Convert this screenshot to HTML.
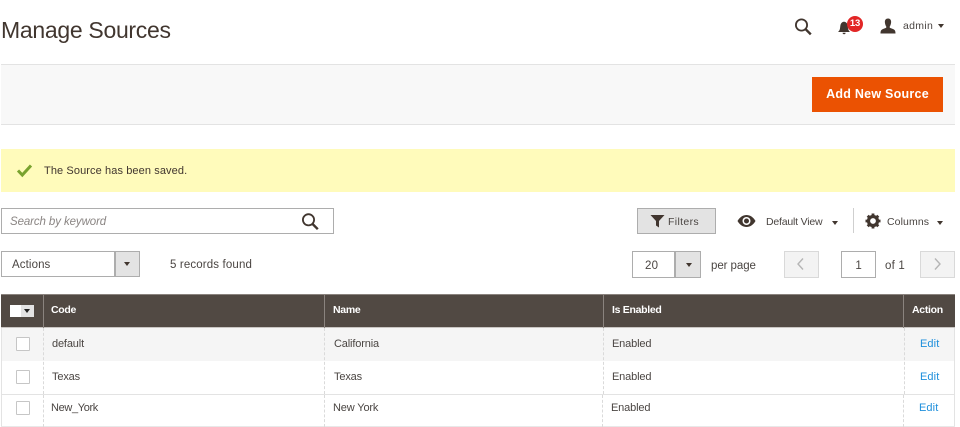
<!DOCTYPE html>
<html><head><meta charset="utf-8">
<style>
html,body{margin:0;padding:0;background:#fff}
#p{position:relative;width:960px;height:427px;overflow:hidden;font-family:"Liberation Sans",sans-serif;font-size:11px;color:#4a4542;letter-spacing:-.15px;filter:blur(.3px)}
#p div,#p span.t,#p svg{position:absolute}
.t{position:absolute;white-space:nowrap;line-height:14px}
.arr{width:0;height:0;border-left:3px solid transparent;border-right:3px solid transparent;border-top:4px solid #41362f}
.cb{width:12px;height:12px;border:1px solid #c6c6c6;background:#fff;border-radius:1px}
.e{color:#1e8fdc;letter-spacing:.1px}
.h{color:#fff;font-weight:bold;font-size:10.5px;letter-spacing:-.3px}
</style></head><body>
<div id="p">
<span class="t" style="left:1px;top:15px;font-size:23px;line-height:30px;color:#41362f;letter-spacing:-.3px">Manage Sources</span>

<svg style="left:793px;top:17px" width="20" height="20" viewBox="0 0 20 20"><circle cx="8.500" cy="8" r="5.600" fill="none" stroke="#41362f" stroke-width="1.800"/><path d="M12.600 12.200L17.800 17.400" stroke="#41362f" stroke-width="2.400"/></svg>
<svg style="left:838px;top:20px" width="14" height="15" viewBox="0 0 14 15"><path d="M0 12C2 10.500 2 8.500 2.300 6 2.700 3 4.500 1.800 6 1.800S9.500 3 9.800 6C10 8.500 10.200 10.500 12 12Z" fill="#41362f"/><path d="M4.600 12.800h3a1.500 1.500 0 0 1-3 0Z" fill="#41362f"/></svg>
<div style="left:847px;top:16px;width:16px;height:16px;border-radius:50%;background:#e22626"></div>
<span class="t" style="left:847px;top:17px;width:16px;text-align:center;color:#fff;font-weight:bold;font-size:9.500px;letter-spacing:-.2px">13</span>
<svg style="left:880px;top:18px" width="16" height="16" viewBox="0 0 16 16"><path d="M8 0.500C10.400 0.500 11.300 2.300 11.100 4.500 10.900 6.600 10 8.300 9.600 8.900 9.600 10 11 10.300 13 11 15 11.800 15.500 13 15.500 15.500H0.500C0.500 13 1 11.800 3 11 5 10.300 6.400 10 6.400 8.900 6 8.300 5.100 6.600 4.900 4.500 4.700 2.300 5.600 0.500 8 0.500Z" fill="#41362f"/></svg>
<span class="t" style="left:903px;top:19px;font-size:10.500px;letter-spacing:.3px">admin</span>
<div class="arr" style="left:938px;top:24px"></div>

<div style="left:1px;top:64px;width:954px;height:59px;background:#f8f8f8;border-top:1px solid #e3e3e3;border-bottom:1px solid #e3e3e3"></div>
<div style="left:812px;top:77px;width:131px;height:35px;background:#eb5202"></div>
<span class="t" style="left:812px;top:87px;width:131px;text-align:center;color:#fff;font-weight:bold;font-size:12.500px;letter-spacing:.25px">Add New Source</span>

<div style="left:1px;top:149px;width:954px;height:43px;background:#fffbbb"></div>
<svg style="left:16px;top:163px" width="17" height="15" viewBox="0 0 17 15"><path d="M2 7.500L6.300 12 15 2.500" fill="none" stroke="#79a22e" stroke-width="3"/></svg>
<span class="t" style="left:44px;top:164px;font-size:11px;letter-spacing:.1px;color:#41362f">The Source has been saved.</span>

<div style="left:1px;top:208px;width:331px;height:24px;border:1px solid #adadad;background:#fff"></div>
<span class="t" style="left:10px;top:215px;font-size:11.500px;font-style:italic;color:#8a8583;letter-spacing:-.1px">Search by keyword</span>
<svg style="left:300px;top:212px" width="20" height="20" viewBox="0 0 20 20"><circle cx="8.500" cy="7.800" r="5.600" fill="none" stroke="#41362f" stroke-width="1.800"/><path d="M12.600 12L17.800 17.200" stroke="#41362f" stroke-width="2.400"/></svg>

<div style="left:637px;top:208px;width:77px;height:24px;background:#e3e3e3;border:1px solid #adadad"></div>
<svg style="left:650px;top:214px" width="15" height="14" viewBox="0 0 15 14"><path d="M.500 1h14L9 7v6.500L6 11.500V7Z" fill="#41362f"/></svg>
<span class="t" style="left:668px;top:215px;font-size:10.500px;letter-spacing:.35px">Filters</span>
<svg style="left:737px;top:214px" width="20" height="14" viewBox="0 0 20 14"><path d="M.500 7C3 2.800 6.300 1 9.500 1S16 2.800 18.500 7C16 11.200 12.700 13 9.500 13S3 11.200 .500 7Z" fill="#41362f"/><circle cx="9.500" cy="7" r="4" fill="#fff"/><circle cx="9.500" cy="7" r="2.500" fill="#41362f"/></svg>
<span class="t" style="left:766px;top:215px;font-size:10.500px;letter-spacing:-.2px">Default View</span>
<div class="arr" style="left:832px;top:221px"></div>
<div style="left:853px;top:208px;width:1px;height:25px;background:#cfcfcf"></div>
<svg style="left:865px;top:213px" width="16" height="16" viewBox="0 0 16 16"><circle cx="8" cy="8" r="4.500" fill="none" stroke="#41362f" stroke-width="3.200"/><path d="M8 .500V3M8 13v2.500M.500 8H3M13 8h2.500M2.700 2.700l1.800 1.800M11.500 11.500l1.800 1.800M2.700 13.300l1.800-1.800M11.500 4.500l1.800-1.800" stroke="#41362f" stroke-width="2.800"/></svg>
<span class="t" style="left:887px;top:215px;font-size:10.500px;letter-spacing:.1px">Columns</span>
<div class="arr" style="left:937px;top:221px"></div>

<div style="left:1px;top:251px;width:112px;height:24px;border:1px solid #adadad;background:#fff"></div>
<div style="left:115px;top:251px;width:23px;height:24px;border:1px solid #adadad;background:#e3e3e3"></div>
<div class="arr" style="left:124px;top:262px"></div>
<span class="t" style="left:12px;top:258px;font-size:11.500px;letter-spacing:.1px">Actions</span>
<span class="t" style="left:170px;top:258px;font-size:11.500px;letter-spacing:.14px">5 records found</span>

<div style="left:632px;top:251px;width:41px;height:25px;border:1px solid #adadad;background:#fff"></div>
<div style="left:675px;top:251px;width:24px;height:25px;border:1px solid #adadad;background:#e3e3e3"></div>
<div class="arr" style="left:686px;top:263px"></div>
<span class="t" style="left:645px;top:259px;font-size:11.500px;letter-spacing:.2px">20</span>
<span class="t" style="left:711px;top:259px;font-size:11.500px;letter-spacing:-.07px">per page</span>
<div style="left:784px;top:251px;width:33px;height:25px;border:1px solid #d9d9d9;background:#f3f3f3"></div>
<svg style="left:796px;top:257px" width="9" height="14" viewBox="0 0 9 14"><path d="M7 1.500L2 7l5 5.500" fill="none" stroke="#b5b5b5" stroke-width="1.400"/></svg>
<div style="left:841px;top:251px;width:33px;height:25px;border:1px solid #adadad;background:#fff"></div>
<span class="t" style="left:841px;top:259px;width:35px;text-align:center;font-size:11.500px">1</span>
<span class="t" style="left:885px;top:259px;font-size:11.500px;letter-spacing:.2px">of 1</span>
<div style="left:920px;top:251px;width:33px;height:25px;border:1px solid #d9d9d9;background:#f3f3f3"></div>
<svg style="left:933px;top:257px" width="9" height="14" viewBox="0 0 9 14"><path d="M2 1.500L7 7l-5 5.500" fill="none" stroke="#b5b5b5" stroke-width="1.400"/></svg>

<div style="left:1px;top:294px;width:954px;height:33px;background:#514943;border-top:1px solid #8a837e"></div>
<div style="left:1px;top:327px;width:954px;height:1px;background:#c9c5c2"></div>
<div style="left:43px;top:295px;width:1px;height:33px;background:#8a837e"></div>
<div style="left:324px;top:295px;width:1px;height:33px;background:#8a837e"></div>
<div style="left:603px;top:295px;width:1px;height:33px;background:#8a837e"></div>
<div style="left:903px;top:295px;width:1px;height:33px;background:#8a837e"></div>
<div style="left:10px;top:305px;width:11px;height:12px;background:#fff"></div>
<div style="left:21px;top:305px;width:13px;height:12px;background:#e3e3e3"></div>
<div class="arr" style="left:24px;top:309px;border-top-color:#222"></div>
<span class="t h" style="left:51px;top:303px">Code</span>
<span class="t h" style="left:333px;top:303px">Name</span>
<span class="t h" style="left:612px;top:303px">Is Enabled</span>
<span class="t h" style="left:912px;top:303px">Action</span>

<div style="left:2px;top:328px;width:952px;height:33px;background:#f5f5f5"></div>
<div style="left:2px;top:361px;width:952px;height:33px;background:#fff"></div>
<div style="left:1px;top:328px;width:1px;height:66px;background:#e3e3e3"></div>
<div style="left:954px;top:328px;width:1px;height:66px;background:#e3e3e3"></div>
<div style="left:1px;top:394px;width:954px;height:1px;background:#e3e3e3"></div>
<div style="left:1px;top:395px;width:1px;height:32px;background:#e3e3e3"></div>
<div style="left:954px;top:395px;width:1px;height:32px;background:#e3e3e3"></div>
<div style="left:1px;top:426px;width:954px;height:1px;background:#e8e8e8"></div>

<div style="left:43px;top:328px;height:66px;border-left:1px dashed #dadada"></div>
<div style="left:324px;top:328px;height:66px;border-left:1px dashed #dadada"></div>
<div style="left:603px;top:328px;height:66px;border-left:1px dashed #dadada"></div>
<div style="left:904px;top:328px;height:66px;border-left:1px dashed #dadada"></div>
<div style="left:43px;top:395px;height:32px;border-left:1px dashed #dadada"></div>
<div style="left:324px;top:395px;height:32px;border-left:1px dashed #dadada"></div>
<div style="left:602px;top:395px;height:32px;border-left:1px dashed #dadada"></div>
<div style="left:903px;top:395px;height:32px;border-left:1px dashed #dadada"></div>

<div class="cb" style="left:16px;top:337px"></div>
<div class="cb" style="left:16px;top:370px"></div>
<div class="cb" style="left:16px;top:401px"></div>

<span class="t" style="left:52px;top:337px">default</span>
<span class="t" style="left:334px;top:337px">California</span>
<span class="t" style="left:612px;top:337px">Enabled</span>
<span class="t e" style="left:920px;top:337px">Edit</span>

<span class="t" style="left:52px;top:370px">Texas</span>
<span class="t" style="left:334px;top:370px">Texas</span>
<span class="t" style="left:612px;top:370px">Enabled</span>
<span class="t e" style="left:920px;top:370px">Edit</span>

<span class="t" style="left:51px;top:401px;letter-spacing:-.35px">New_York</span>
<span class="t" style="left:333px;top:401px">New York</span>
<span class="t" style="left:611px;top:401px">Enabled</span>
<span class="t e" style="left:919px;top:401px">Edit</span>
</div>
</body></html>
